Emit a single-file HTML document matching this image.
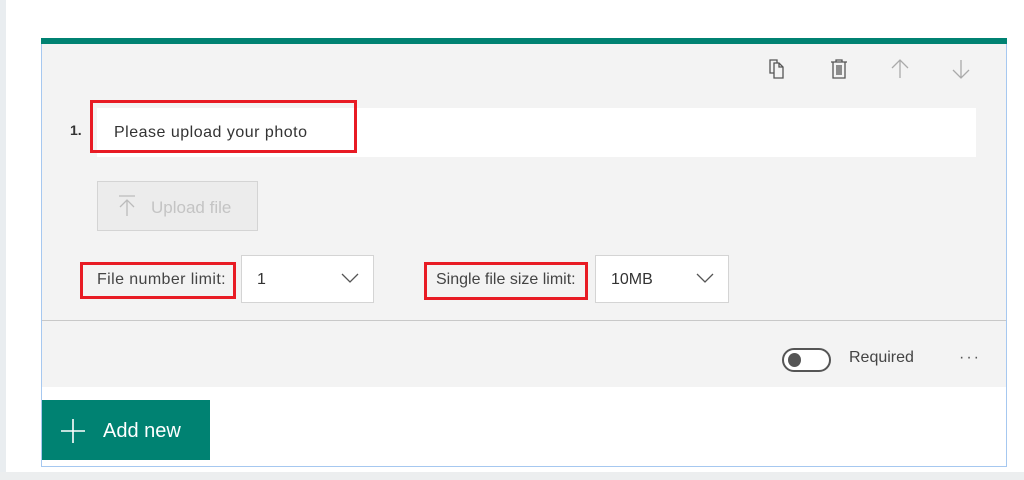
<!DOCTYPE html><html><head><style>
body{margin:0;width:1024px;height:480px;background:#fff;position:relative;overflow:hidden;font-family:"Liberation Sans",sans-serif}
.a{position:absolute;box-sizing:border-box}
</style></head><body>
<div class="a" style="left:0;top:0;width:6px;height:472px;background:#e9edf0"></div>
<div class="a" style="left:0;top:472px;width:1024px;height:8px;background:#eceeef"></div>
<div class="a" style="left:41px;top:38px;width:966px;height:429px;border:1px solid #a6c8f0;border-top:none;background:#fff"></div>
<div class="a" style="left:41px;top:38px;width:966px;height:6px;background:#008272"></div>
<div class="a" style="left:42px;top:44px;width:964px;height:343px;background:#f3f3f3"></div>
<div class="a" style="left:42px;top:320px;width:964px;height:1px;background:#c8c8c8"></div>
<svg class="a" style="left:766px;top:57px" width="24" height="24" viewBox="0 0 24 24" fill="none" stroke="#555" stroke-width="1.3"><path d="M8 16H4V3h7v3"/><path d="M8 6h5l4 4v11H8z"/><path d="M13 6v4h4"/></svg>
<svg class="a" style="left:827px;top:57px" width="24" height="24" viewBox="0 0 24 24" fill="none" stroke="#555" stroke-width="1.3"><path d="M4 5h16M9 5V3h6v2M6 5v16h12V5M10 8v10M12 8v10M14 8v10"/></svg>
<svg class="a" style="left:888px;top:57px" width="24" height="24" viewBox="0 0 24 24" fill="none" stroke="#aaa" stroke-width="1.3"><path d="M12 21V3M4 11l8-8 8 8"/></svg>
<svg class="a" style="left:949px;top:57px" width="24" height="24" viewBox="0 0 24 24" fill="none" stroke="#aaa" stroke-width="1.3"><path d="M12 3v18M4 13l8 8 8-8"/></svg>
<div class="a" style="left:70px;top:122px;font-size:14px;font-weight:bold;color:#333">1.</div>
<div class="a" style="left:97px;top:108px;width:879px;height:49px;background:#fff"></div>
<div class="a" style="left:90px;top:100px;width:267px;height:53px;border:3px solid #e81b24"></div>
<div class="a" style="left:114px;top:124px;font-size:16px;letter-spacing:0.5px;color:#333">Please upload your photo</div>
<div class="a" style="left:97px;top:181px;width:161px;height:50px;border:1px solid #d4d4d4;background:#ececec"></div>
<svg class="a" style="left:116px;top:194px" width="22" height="24" viewBox="0 0 22 24" fill="none" stroke="#bbb" stroke-width="1.3"><path d="M3 2h16M11 22V6M4 13l7-7 7 7"/></svg>
<div class="a" style="left:151px;top:198px;font-size:17px;color:#c4c4c4">Upload file</div>
<div class="a" style="left:80px;top:262px;width:156px;height:37px;border:3px solid #e81b24"></div>
<div class="a" style="left:97px;top:271px;font-size:16px;letter-spacing:0.4px;color:#444">File number limit:</div>
<div class="a" style="left:241px;top:255px;width:133px;height:48px;border:1px solid #d4d4d4;background:#fff"></div>
<div class="a" style="left:257px;top:271px;font-size:16px;color:#333">1</div>
<svg class="a" style="left:340px;top:272px" width="20" height="12" viewBox="0 0 20 12" fill="none" stroke="#555" stroke-width="1.3"><path d="M2 2l8 8 8-8"/></svg>
<div class="a" style="left:424px;top:262px;width:164px;height:38px;border:3px solid #e81b24"></div>
<div class="a" style="left:436px;top:271px;font-size:16px;color:#444">Single file size limit:</div>
<div class="a" style="left:595px;top:255px;width:134px;height:48px;border:1px solid #d4d4d4;background:#fff"></div>
<div class="a" style="left:611px;top:271px;font-size:16px;color:#333">10MB</div>
<svg class="a" style="left:695px;top:272px" width="20" height="12" viewBox="0 0 20 12" fill="none" stroke="#555" stroke-width="1.3"><path d="M2 2l8 8 8-8"/></svg>
<div class="a" style="left:782px;top:348px;width:49px;height:24px;border:2px solid #555;border-radius:12px;background:#fff"></div>
<div class="a" style="left:788px;top:353px;width:13px;height:14px;border-radius:50%;background:#555"></div>
<div class="a" style="left:849px;top:349px;font-size:16px;color:#444">Required</div>
<div class="a" style="left:959px;top:349px;font-size:16px;color:#555;letter-spacing:2px">···</div>
<div class="a" style="left:42px;top:400px;width:168px;height:60px;background:#008272"></div>
<svg class="a" style="left:60px;top:418px" width="26" height="26" viewBox="0 0 26 26" stroke="#fff" stroke-width="1.6"><path d="M13 1v24M1 13h24"/></svg>
<div class="a" style="left:103px;top:420px;font-size:20px;color:#fff">Add new</div>
</body></html>
